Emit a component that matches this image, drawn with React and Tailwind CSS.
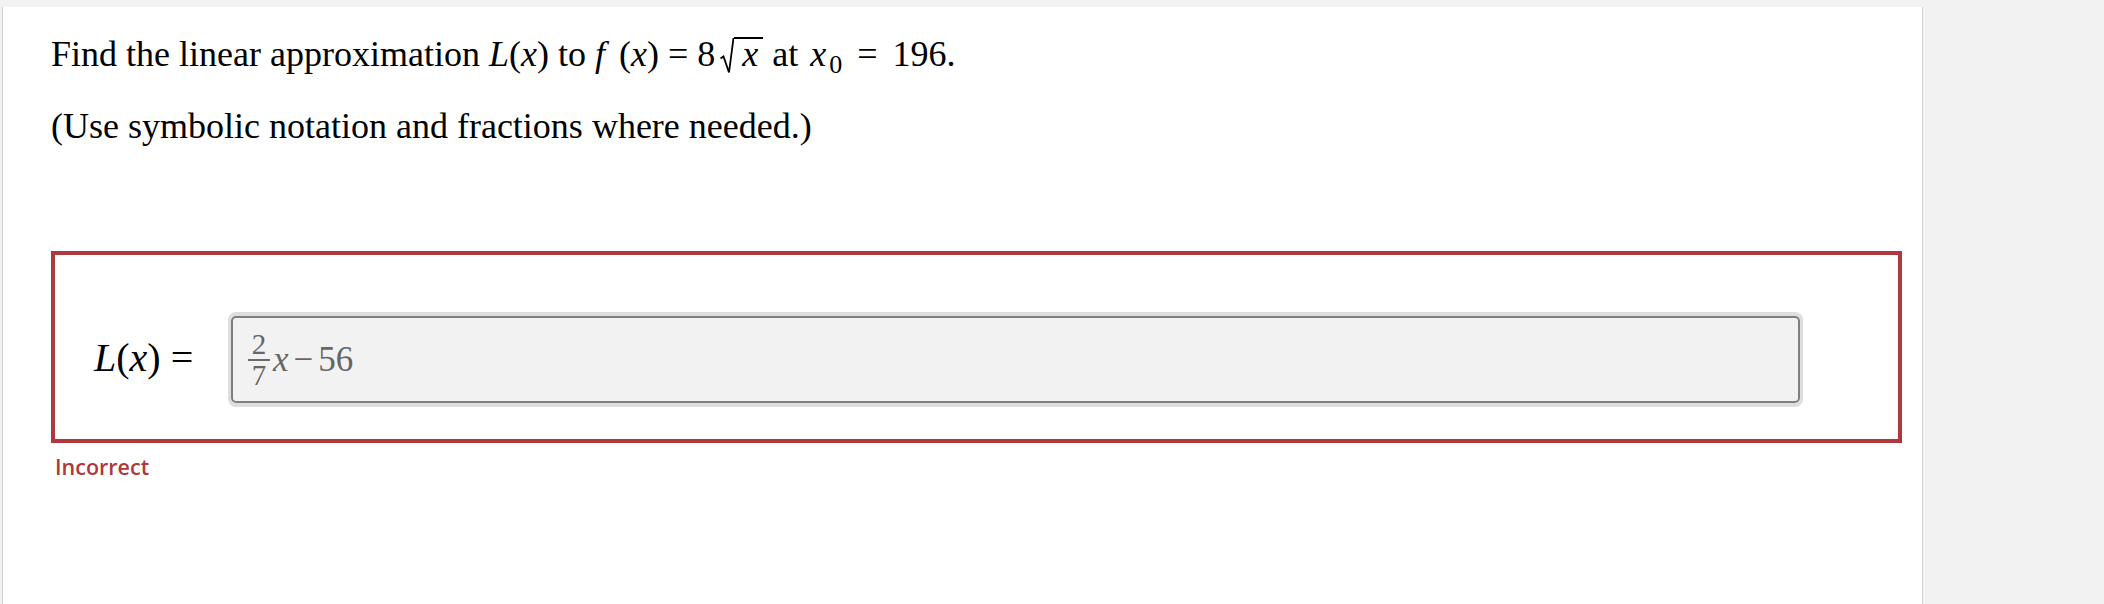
import React from 'react';

const serif = { fontFamily: '"Liberation Serif", "Times New Roman", serif' };

// square root: radical sign + overline over the radicand
const Radical = ({ children }) => (
  <span className="ml-[5px] whitespace-nowrap">
    <svg width="14" height="37" viewBox="0 0 14 37" className="inline-block align-[-8px]">
      <path d="M0.5 21.5 L3.5 19.5 L9 35.5 L13.5 1" fill="none" stroke="#000" strokeWidth="1.8" strokeLinejoin="miter" />
    </svg>
    <span className="inline-block border-t-2 border-black leading-[30px] pl-[8px] pr-[5px]">{children}</span>
  </span>
);

const Fraction = ({ top, bottom }) => (
  <span className="inline-flex flex-col items-center text-[29px] leading-[25px] mr-[3px] font-['Liberation_Serif',serif]">
    <span>{top}</span>
    <span className="w-[22px] border-t-2 border-[#6b6b6b] my-[2px]"></span>
    <span>{bottom}</span>
  </span>
);

const App = () => {
  return (
    <div className="w-[2104px] h-[604px] bg-[#f2f2f2] pt-[7px] overflow-hidden">
      <div className="ml-[2px] w-[1921px] h-[597px] bg-white border-l border-r border-[#d4d4d4] pl-[48px]" style={serif}>
        <p className="pt-[23px] h-[71px] text-[36px] leading-[48px] text-black whitespace-nowrap">
          Find the linear approximation <i>L</i>(<i>x</i>) to <i>f</i>
          <span className="ml-[14px]">(</span><i>x</i>)
          <span className="ml-[9px]">=</span>
          <span className="ml-[9px]">8</span>
          <Radical><i>x</i></Radical> at <i className="ml-[3px]">x</i>
          <span className="ml-[3px] text-[26px] align-[-7px]">0</span>
          <span className="ml-[15px]">=</span>
          <span className="ml-[15px]">196.</span>
        </p>
        <p className="mt-[24px] text-[36px] leading-[48px] text-black">
          (Use symbolic notation and fractions where needed.)
        </p>

        <div className="mt-[101px] w-[1851px] h-[192px] border-[4px] border-[#b0373b] pl-[39px] pt-[57px]">
          <div className="flex items-center">
            <span className="w-[134px] text-[40px] leading-[46px] text-black mt-[-4px]">
              <i>L</i>(<i>x</i>)<span className="ml-[10px]">=</span>
            </span>
            <div className="w-[1575px] h-[95px] border-y-[4px] border-x-[3px] border-[#dedede] rounded-[8px]">
              <div
                className="h-full border-2 border-[#7f7f7f] rounded-[5px] bg-[#f2f2f2] flex items-center pl-[15px] text-[#666666] text-[35px] leading-[40px] font-['Liberation_Serif',serif]"
                style={serif}
              >
                <Fraction top="2" bottom="7" />
                <i>x</i>
                <span className="ml-[5px]">−</span>
                <span className="ml-[5px]">56</span>
              </div>
            </div>
          </div>
        </div>

        <p
          className="mt-[9px] pl-[4px] text-[21.5px] leading-[30px] font-semibold text-[#b0373b]"
          style={{ fontFamily: '"Open Sans", "Noto Sans", sans-serif' }}
        >
          Incorrect
        </p>
      </div>
    </div>
  );
};

export default App;
